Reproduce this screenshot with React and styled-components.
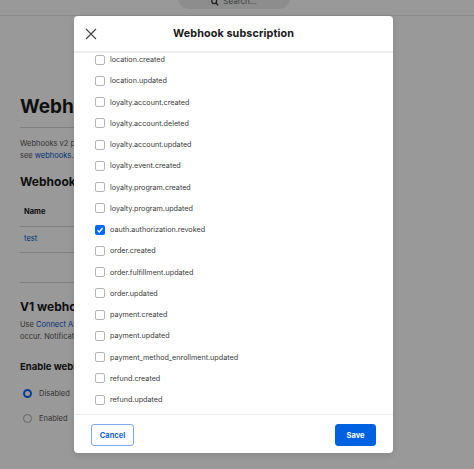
import React from "react";
import styled, { createGlobalStyle } from "styled-components";

const Global = createGlobalStyle`
  html, body { margin: 0; padding: 0; background: #fff; }
  body { font-family: Inter, "Noto Sans", sans-serif; width: 474px; height: 469px; overflow: hidden; }
  * { box-sizing: border-box; }
`;

const Page = styled.div`
  position: relative;
  width: 474px;
  height: 469px;
  overflow: hidden;
  background: #fff;
  color: #1a1a1a;
`;

const TopBar = styled.div`
  height: 16px;
  border-bottom: 1px solid #e6e6e6;
  display: flex;
  justify-content: center;
  align-items: flex-end;
  padding-bottom: 6px;
  padding-right: 6px;
`;

const SearchPill = styled.div`
  width: 112px;
  height: 22px;
  margin-top: -12px;
  border-radius: 11px;
  background: #ececec;
  display: flex;
  align-items: flex-end;
  justify-content: center;
  gap: 4px;
  padding-bottom: 3px;
  font-size: 8px;
  color: #666;
`;

const Content = styled.div`
  width: 74px;
  padding-left: 20px;
  overflow: hidden;
  white-space: nowrap;
`;

const H1 = styled.h1`
  margin: 79px 0 0;
  font-size: 19px;
  font-weight: 700;
  line-height: 24px;
  padding-bottom: 8px;
  border-bottom: 1px solid #d6d6d6;
`;

const Para = styled.p`
  margin: ${(p) => p.$mt || 0}px 0 0;
  font-size: 7.5px;
  line-height: 12px;
  color: #555;
`;

const Link = styled.span`
  color: #0055cc;
`;

const H2 = styled.h2`
  margin: ${(p) => p.$mt}px 0 0;
  font-size: ${(p) => p.$size || 12}px;
  font-weight: 700;
  line-height: 16px;
`;

const TableHead = styled.div`
  margin-top: 16px;
  padding: 0 4px 8px;
  border-bottom: 1px solid #d6d6d6;
  font-size: 7.5px;
  font-weight: 700;
  line-height: 12px;
`;

const TableRow = styled.div`
  padding: 6px 4px 7px;
  border-bottom: 1px solid #d6d6d6;
  font-size: 7.5px;
  line-height: 12px;
  color: #0055cc;
`;

const Spacer = styled.div`
  height: 30px;
  border-bottom: 1px solid #d6d6d6;
`;

const RadioRow = styled.div`
  display: flex;
  align-items: center;
  gap: 7px;
  margin-top: ${(p) => p.$mt}px;
  padding-left: 3px;
  font-size: 7.5px;
  color: #555;
`;

const Radio = styled.span`
  width: 9px;
  height: 9px;
  border-radius: 50%;
  border: ${(p) => (p.$on ? "2.5px solid #006aff" : "1px solid #aaa")};
  background: #fff;
`;

const Overlay = styled.div`
  position: absolute;
  inset: 0;
  background: rgba(0, 0, 0, 0.4);
`;

const Modal = styled.div`
  position: absolute;
  left: 74px;
  top: 16px;
  width: 319px;
  height: 437px;
  background: #fff;
  border-radius: 4px;
  display: flex;
  flex-direction: column;
  overflow: hidden;
  box-shadow: 0 2px 6px rgba(0, 0, 0, 0.12);
`;

const Header = styled.div`
  height: 37px;
  flex-shrink: 0;
  display: flex;
  align-items: center;
  justify-content: center;
  position: relative;
  border-bottom: 2px solid #eeeeee;
`;

const Title = styled.div`
  font-size: 10.8px;
  font-weight: 700;
  color: #1a1a1a;
  letter-spacing: 0.1px;
`;

const Close = styled.button`
  position: absolute;
  left: 11px;
  top: 12px;
  width: 12px;
  height: 12px;
  padding: 0;
  border: 0;
  background: none;
  display: flex;
`;

const Body = styled.div`
  flex: 1;
  overflow: hidden;
`;

const List = styled.div`
  margin-top: -4px;
  display: flex;
  flex-direction: column;
`;

const Item = styled.label`
  height: 21.25px;
  display: flex;
  align-items: center;
  gap: 5px;
  padding-left: 21px;
  font-size: 7.2px;
  color: #3a3a3a;
`;

const Box = styled.span`
  width: 10px;
  height: 10px;
  border-radius: 2px;
  border: ${(p) => (p.$on ? "none" : "1px solid #b5b5b5")};
  background: ${(p) => (p.$on ? "#006aff" : "#fff")};
  display: flex;
  align-items: center;
  justify-content: center;
`;

const Footer = styled.div`
  height: 39px;
  flex-shrink: 0;
  border-top: 1px solid #eeeeee;
  display: flex;
  justify-content: space-between;
  align-items: flex-start;
  padding: 9px 17px 0;
`;

const Button = styled.button`
  height: 22px;
  width: ${(p) => p.$w}px;
  border-radius: 3px;
  font-family: inherit;
  font-size: 7.5px;
  font-weight: 700;
  border: 1px solid ${(p) => (p.$primary ? "#0062e0" : "#7fa9ea")};
  background: ${(p) => (p.$primary ? "#0062e0" : "#fff")};
  color: ${(p) => (p.$primary ? "#fff" : "#1a5fd0")};
  padding: 0;
`;

const items = [
  "location.created",
  "location.updated",
  "loyalty.account.created",
  "loyalty.account.deleted",
  "loyalty.account.updated",
  "loyalty.event.created",
  "loyalty.program.created",
  "loyalty.program.updated",
  "oauth.authorization.revoked",
  "order.created",
  "order.fulfillment.updated",
  "order.updated",
  "payment.created",
  "payment.updated",
  "payment_method_enrollment.updated",
  "refund.created",
  "refund.updated",
];

export default function App() {
  return (
    <>
      <Global />
      <Page>
        <TopBar>
          <SearchPill>
            <svg width="8" height="8" viewBox="0 0 10 10">
              <circle cx="4" cy="4" r="3" fill="none" stroke="#333" strokeWidth="1.6" />
              <line x1="6.2" y1="6.2" x2="9" y2="9" stroke="#333" strokeWidth="1.6" />
            </svg>
            <span>Search...</span>
          </SearchPill>
        </TopBar>
        <Content>
          <H1>Webhooks</H1>
          <Para $mt={10}>Webhooks v2 provide real-time notifications</Para>
          <Para>
            see <Link>webhooks</Link>.
          </Para>
          <H2 $mt={12}>Webhooks</H2>
          <TableHead>Name</TableHead>
          <TableRow>test</TableRow>
          <Spacer />
          <H2 $mt={16}>V1 webhooks</H2>
          <Para $mt={4}>
            Use <Link>Connect API</Link> webhooks
          </Para>
          <Para>occur. Notifications</Para>
          <H2 $mt={16} $size={9.5}>Enable webhooks</H2>
          <RadioRow $mt={14}>
            <Radio $on />
            Disabled
          </RadioRow>
          <RadioRow $mt={16}>
            <Radio />
            Enabled
          </RadioRow>
        </Content>
        <Overlay />
        <Modal>
          <Header>
            <Close aria-label="Close">
              <svg width="12" height="12" viewBox="0 0 12 12">
                <path d="M1 1 L11 11 M11 1 L1 11" stroke="#444" strokeWidth="1.1" fill="none" />
              </svg>
            </Close>
            <Title>Webhook subscription</Title>
          </Header>
          <Body>
            <List>
              {items.map((it) => {
                const on = it === "oauth.authorization.revoked";
                return (
                  <Item key={it}>
                    <Box $on={on}>
                      {on && (
                        <svg width="8" height="8" viewBox="0 0 8 8">
                          <path d="M1.5 4.2 L3.3 6 L6.6 2" stroke="#fff" strokeWidth="1.3" fill="none" />
                        </svg>
                      )}
                    </Box>
                    {it}
                  </Item>
                );
              })}
            </List>
          </Body>
          <Footer>
            <Button $w={43}>Cancel</Button>
            <Button $w={41} $primary>Save</Button>
          </Footer>
        </Modal>
      </Page>
    </>
  );
}
